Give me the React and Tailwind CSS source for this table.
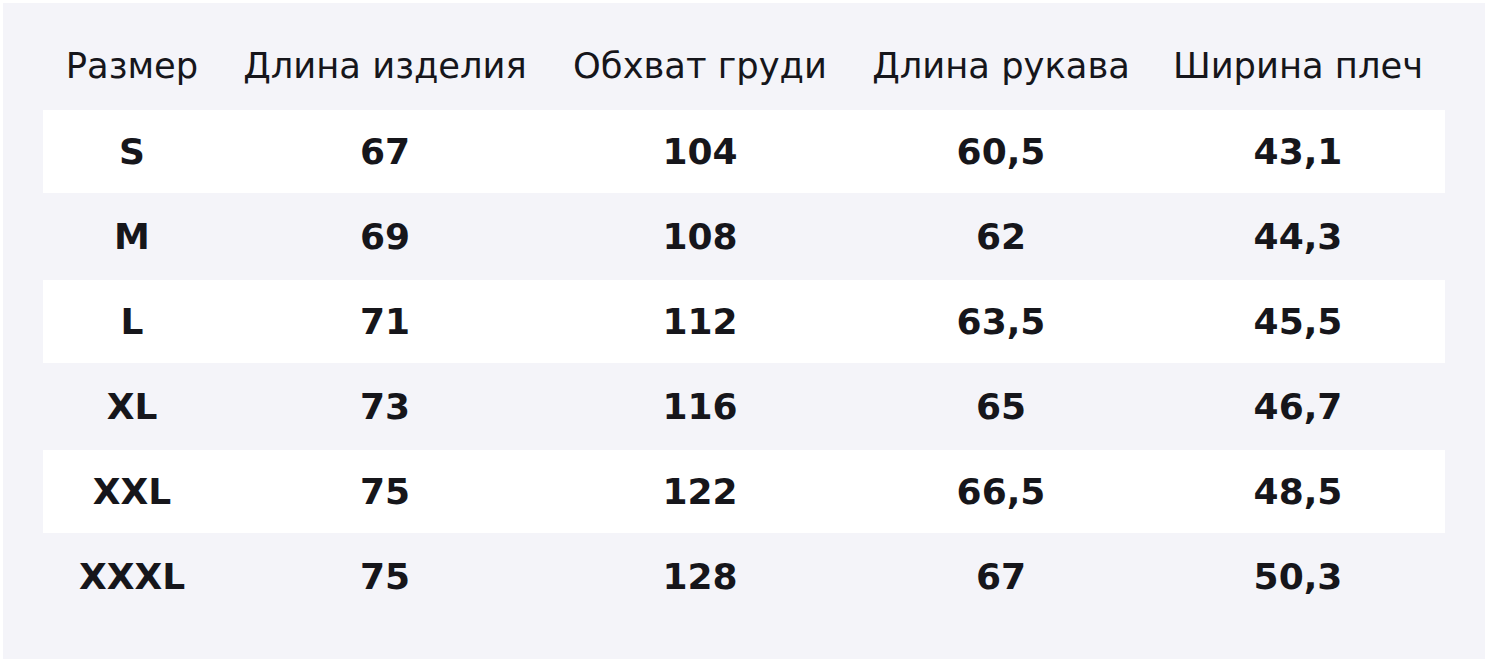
const headers = ["Размер", "Длина изделия", "Обхват груди", "Длина рукава", "Ширина плеч"];

const rows = [
  ["S", "67", "104", "60,5", "43,1"],
  ["M", "69", "108", "62", "44,3"],
  ["L", "71", "112", "63,5", "45,5"],
  ["XL", "73", "116", "65", "46,7"],
  ["XXL", "75", "122", "66,5", "48,5"],
  ["XXXL", "75", "128", "67", "50,3"],
];

const cols = "grid grid-cols-[178px_328px_302px_300px_294px]";

export default function App() {
  return (
    <div className="w-[1488px] h-[663px] bg-white pt-[3px] pl-[3px]" style={{ fontFamily: '"DejaVu Sans", sans-serif' }}>
      <div className="w-[1482px] h-[656px] bg-[#f4f4f9] px-10 pt-5 text-[#16161b]">
        <div className={`${cols} h-[87px] items-center text-[35.3px]`}>
          {headers.map((h) => (
            <div key={h} className="text-center whitespace-nowrap">
              {h}
            </div>
          ))}
        </div>
        {rows.map((r, i) => (
          <div
            key={r[0]}
            className={`${cols} items-center text-[36px] font-bold ${
              i % 2 === 0 ? "bg-white h-[83px]" : "h-[87px]"
            }`}
          >
            {r.map((c, j) => (
              <div key={j} className="text-center">
                {c}
              </div>
            ))}
          </div>
        ))}
      </div>
    </div>
  );
}
